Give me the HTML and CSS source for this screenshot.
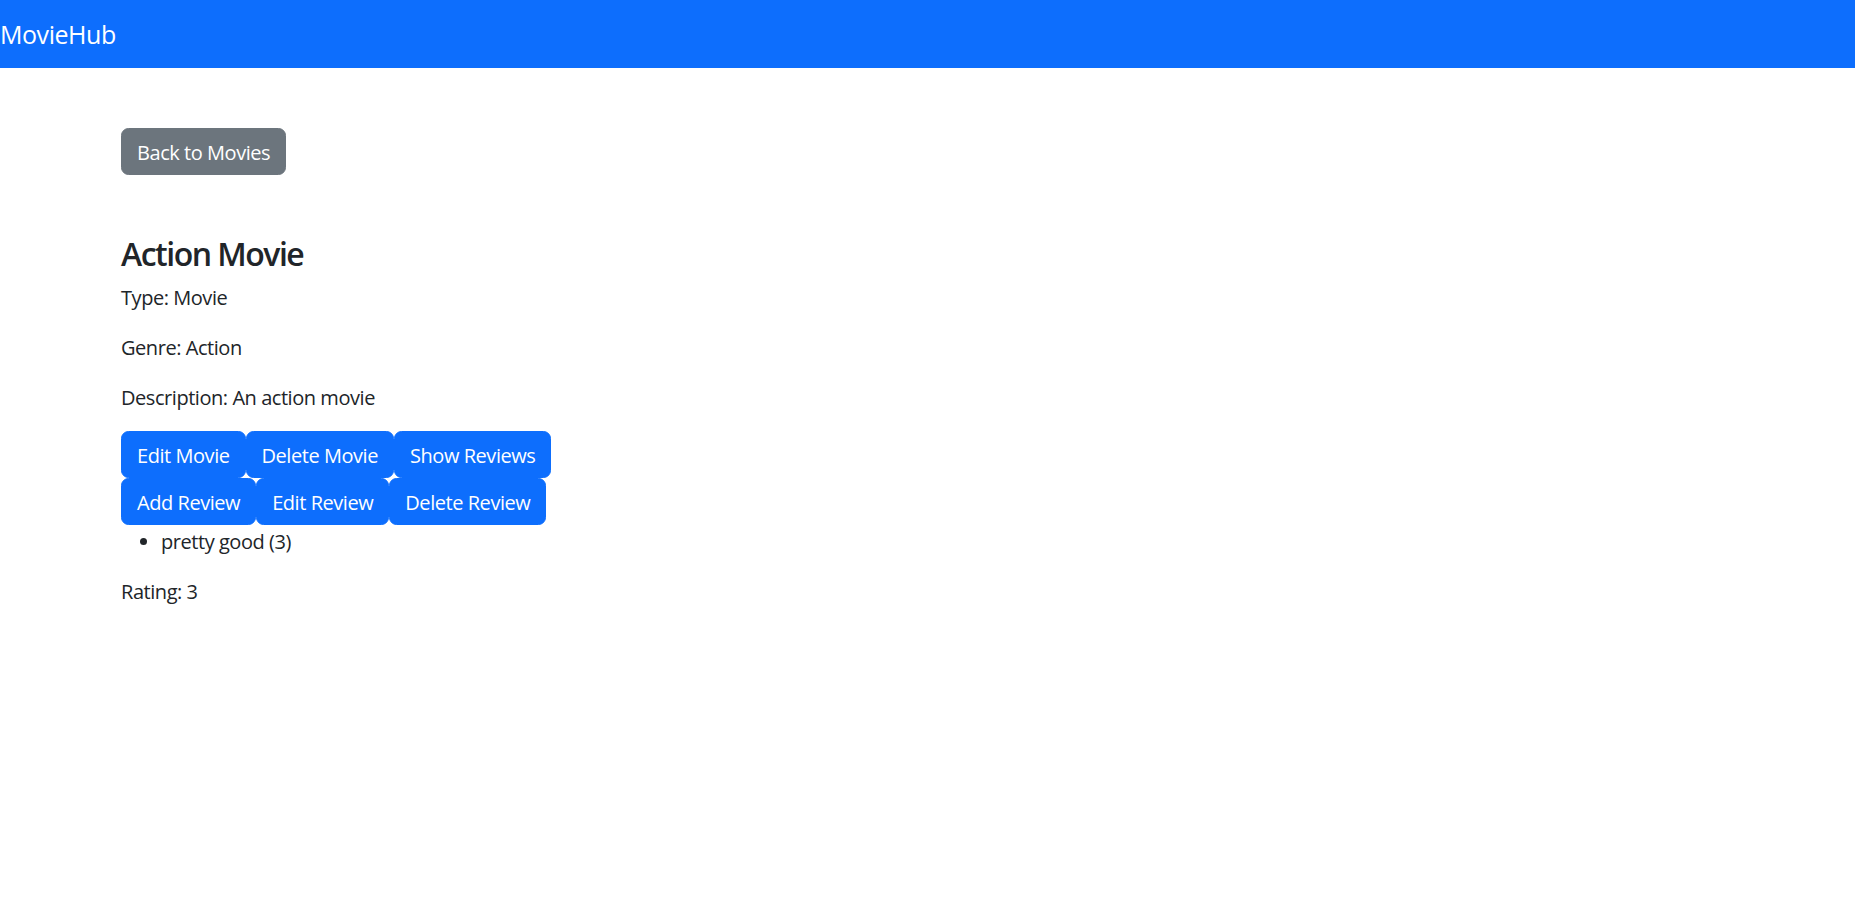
FILE: index.html
```html
<!DOCTYPE html>
<html lang="en">
<head>
<meta charset="utf-8">
<title>MovieHub</title>
<link rel="stylesheet" href="styles.css">
</head>
<body>
<nav class="navbar">
  <a class="brand" href="#">MovieHub</a>
</nav>
<main class="container">
  <div class="back-wrap">
    <a class="btn btn-secondary" href="#">Back to Movies</a>
  </div>
  <h3 class="title">Action Movie</h3>
  <p>Type: Movie</p>
  <p>Genre: Action</p>
  <p>Description: An action movie</p>
  <div class="btn-row">
    <button class="btn btn-primary">Edit Movie</button>
    <button class="btn btn-primary">Delete Movie</button>
    <button class="btn btn-primary">Show Reviews</button>
  </div>
  <div class="btn-row">
    <button class="btn btn-primary">Add Review</button>
    <button class="btn btn-primary">Edit Review</button>
    <button class="btn btn-primary">Delete Review</button>
  </div>
  <ul class="reviews">
    <li>pretty good (3)</li>
  </ul>
  <p>Rating: 3</p>
</main>
</body>
</html>
```
FILE: styles.css
```css
* { box-sizing: border-box; }
body {
  margin: 0;
  font-family: "Open Sans", "Noto Sans", sans-serif;
  font-size: 20px;
  line-height: 1.5;
  color: #212529;
  letter-spacing: -0.45px;
  background: #fff;
}
.navbar {
  background: #0d6efd;
  height: 67.5px;
  display: flex;
  align-items: center;
}
.brand {
  color: #fff;
  font-size: 25px;
  line-height: 37.5px;
  padding-top: 2px;
  text-decoration: none;
}
.container {
  padding-left: 121px;
}
.back-wrap {
  margin-top: 60px;
  margin-bottom: 57px;
}
.btn {
  display: inline-block;
  font-family: inherit;
  font-size: 20px;
  line-height: 30px;
  letter-spacing: -0.45px;
  padding: 9px 15px 6px;
  border: 1.25px solid transparent;
  border-radius: 7.5px;
  color: #fff;
  text-decoration: none;
  cursor: pointer;
  margin: 0;
}
.btn-secondary {
  background: #6c757d;
  border-color: #6c757d;
}
.btn-primary {
  background: #0d6efd;
  border-color: #0d6efd;
}
.title {
  font-size: 32px;
  line-height: 42px;
  font-weight: 600;
  letter-spacing: -1.5px;
  margin: 0 0 6px;
  padding-top: 1px;
}
p {
  margin: 0 0 18px;
  padding-top: 2px;
}
.btn-row {
  display: flex;
}
.reviews {
  margin: 0 0 18px;
  padding: 2px 0 0 40px;
}
```
